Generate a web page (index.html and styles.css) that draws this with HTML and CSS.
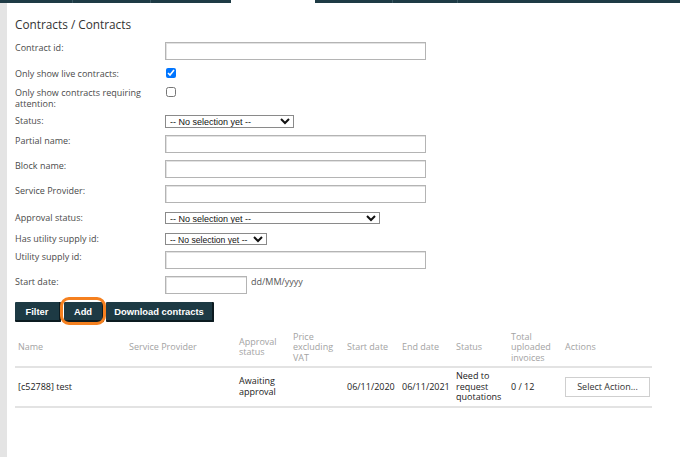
FILE: index.html
```html
<!DOCTYPE html>
<html lang="en">
<head>
<meta charset="utf-8">
<title>Contracts</title>
<link rel="stylesheet" href="styles.css">
</head>
<body>
<div class="topbar">
  <div class="seg s1"></div>
  <div class="seg s2"></div>
  <div class="seg s3"></div>
  <div class="seg active"></div>
  <div class="seg s4"></div>
  <div class="seg s5"></div>
  <div class="seg s6"></div>
</div>
<div class="page">
  <div class="sidebar"></div>
  <div class="main">
    <h1 class="title">Contracts / Contracts</h1>
    <form class="form">
      <div class="row r-input r-first"><label class="lbl">Contract id:</label><input class="txt wide" type="text"></div>
      <div class="row r-live"><label class="lbl">Only show live contracts:</label><input class="chk" type="checkbox" checked></div>
      <div class="row r-attn"><label class="lbl">Only show contracts requiring attention:</label><input class="chk" type="checkbox"></div>
      <div class="row r-status"><label class="lbl">Status:</label><select class="sel sel-status"><option>-- No selection yet --</option></select></div>
      <div class="row r-input"><label class="lbl">Partial name:</label><input class="txt wide" type="text"></div>
      <div class="row r-input"><label class="lbl">Block name:</label><input class="txt wide" type="text"></div>
      <div class="row r-input r-more"><label class="lbl">Service Provider:</label><input class="txt wide" type="text"></div>
      <div class="row r-approval"><label class="lbl">Approval status:</label><select class="sel sel-approval"><option>-- No selection yet --</option></select></div>
      <div class="row r-util"><label class="lbl">Has utility supply id:</label><select class="sel sel-util"><option>-- No selection yet --</option></select></div>
      <div class="row r-input"><label class="lbl">Utility supply id:</label><input class="txt wide" type="text"></div>
      <div class="row r-input r-last"><label class="lbl">Start date:</label><div class="date"><input class="txt short" type="text"><span class="hint">dd/MM/yyyy</span></div></div>
      <div class="buttons">
        <button type="button" class="btn b-filter">Filter</button>
        <button type="button" class="btn b-add">Add</button>
        <button type="button" class="btn b-download">Download contracts</button>
      </div>
    </form>
    <table class="grid">
      <colgroup>
        <col style="width:111px"><col style="width:110px"><col style="width:54px"><col style="width:54px"><col style="width:55px"><col style="width:54px"><col style="width:55px"><col style="width:54px"><col style="width:90px">
      </colgroup>
      <thead>
        <tr>
          <th>Name</th>
          <th>Service Provider</th>
          <th>Approval status</th>
          <th>Price excluding VAT</th>
          <th>Start date</th>
          <th>End date</th>
          <th>Status</th>
          <th>Total uploaded invoices</th>
          <th>Actions</th>
        </tr>
      </thead>
      <tbody>
        <tr>
          <td>[c52788] test</td>
          <td></td>
          <td>Awaiting approval</td>
          <td></td>
          <td>06/11/2020</td>
          <td>06/11/2021</td>
          <td>Need to request quotations</td>
          <td>0 / 12</td>
          <td><button type="button" class="action">Select Action...</button></td>
        </tr>
      </tbody>
    </table>
  </div>
</div>
</body>
</html>
```
FILE: styles.css
```css
html, body {
  margin: 0;
  padding: 0;
  background: #fff;
}
body {
  font-family: "Open Sans", "DejaVu Sans", sans-serif;
  color: #444;
  height: 457px;
  overflow: hidden;
}
.topbar {
  display: flex;
  height: 3px;
}
.seg {
  height: 3px;
  background: #1e3b45;
}
.s1 { width: 72px; border-right: 1px solid #3a5761; }
.s2 { width: 77px; border-right: 1px solid #3a5761; }
.s3 { width: 80px; }
.active { width: 84px; background: #fff; }
.s4 { width: 77px; border-right: 1px solid #3a5761; }
.s5 { width: 64px; border-right: 1px solid #3a5761; }
.s6 { flex: 1; }
.page {
  display: flex;
  height: 454px;
}
.sidebar {
  width: 7px;
  background: #e4e4e4;
  flex: none;
}
.main {
  flex: 1;
  padding: 13px 0 0 8px;
}
.title {
  margin: 0 0 10px;
  font-size: 11.8px;
  line-height: 16px;
  font-weight: normal;
  color: #333;
}
.form {
  margin: 0;
}
.row {
  display: grid;
  grid-template-columns: 150px 1fr;
  align-items: start;
  margin-bottom: 7px;
}
.lbl {
  font-size: 9px;
  line-height: 10.5px;
  color: #4a4a4a;
  padding-top: 1px;
  width: 130px;
}
.r-input { height: 18px; }
.r-first { margin-bottom: 8px; }
.r-more { margin-bottom: 9px; }
.r-last { margin-bottom: 8px; }
.r-live { height: 12px; }
.r-attn { height: 21px; }
.r-status { height: 13px; }
.r-approval { height: 12px; margin-bottom: 9px; }
.r-util { height: 12px; margin-bottom: 6px; }
.txt {
  box-sizing: border-box;
  height: 18px;
  border: 1px solid #b4b4b4;
  box-shadow: inset 1px 1px 0 #e2e2e2;
  padding: 0 3px;
  margin: 0;
  font-size: 9px;
  background: #fff;
}
.wide { width: 261px; }
.short { width: 82px; }
.date {
  display: flex;
  align-items: flex-start;
  gap: 4px;
}
.hint {
  font-size: 9px;
  line-height: 10.5px;
  padding-top: 1px;
  color: #555;
}
.chk {
  width: 10px;
  height: 10px;
  margin: 0 0 0 1px;
}
.sel {
  box-sizing: border-box;
  height: 13px;
  margin: 0;
  padding: 0;
  font-family: "Liberation Sans", Arial, sans-serif;
  font-size: 9px;
  color: #111;
  border: 1px solid #8a8a8a;
  border-radius: 0;
  background: #fff;
}
.sel-status { width: 129px; }
.sel-approval { width: 215px; height: 12px; }
.sel-util { width: 102px; height: 12px; font-size: 8.6px; }
.buttons {
  display: flex;
  height: 21px;
}
.btn {
  position: relative;
  height: 20px;
  box-sizing: border-box;
  padding: 0;
  margin: 0;
  white-space: nowrap;
  background: #1d3a44;
  color: #fff;
  font-family: "Liberation Sans", Arial, sans-serif;
  font-weight: bold;
  font-size: 9.4px;
  border: none;
  border-right: 2px solid #0c1b20;
  border-bottom: 2px solid #0c1b20;
  border-radius: 1px;
}
.b-filter { width: 46px; }
.b-add { width: 40px; margin-left: 3px; }
.b-download { width: 108px; margin-left: 2px; }
.b-add::after {
  content: "";
  position: absolute;
  left: -4px;
  top: -5px;
  right: -4px;
  bottom: -5px;
  border: 3px solid #f5801f;
  border-radius: 9px;
}
.grid {
  margin-top: 6px;
  width: 637px;
  border-collapse: collapse;
  table-layout: fixed;
  font-size: 9px;
}
.grid th {
  font-weight: normal;
  color: #a3a3a3;
  text-align: left;
  vertical-align: middle;
  line-height: 10.3px;
  padding: 3px 3px 3px;
  height: 30px;
  border-bottom: 2px solid #e3e3e3;
}
.grid td {
  color: #222;
  vertical-align: middle;
  line-height: 10.5px;
  padding: 3px 3px;
  height: 32px;
  border-bottom: 2px solid #e3e3e3;
}
.action {
  box-sizing: border-box;
  width: 85px;
  height: 20px;
  margin: 0;
  padding: 0;
  background: #fff;
  border: 1px solid #cfcfcf;
  font-family: "Open Sans", "DejaVu Sans", sans-serif;
  font-size: 9px;
  color: #333;
}
```
